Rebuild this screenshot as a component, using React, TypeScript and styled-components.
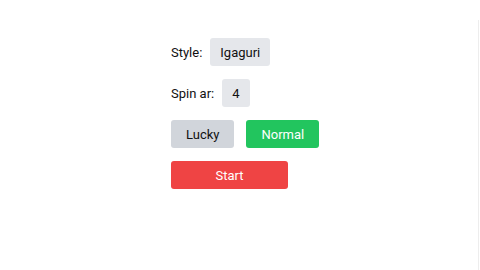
import React from "react";
import styled, { createGlobalStyle } from "styled-components";

const GlobalStyle = createGlobalStyle`
    html, body {
        margin: 0;
        padding: 0;
        background: #ffffff;
    }
    body {
        font-family: Roboto, "Noto Sans", sans-serif;
        color: #111111;
    }
`;

const SPage = styled.div`
    width: 480px;
    height: 270px;
    box-sizing: border-box;
    padding: 38px 0 0 171px;
    position: relative;
`;

const SEdge = styled.div`
    position: absolute;
    top: 20px;
    right: 1px;
    bottom: 0;
    width: 1px;
    background: #ededed;
`;

const SPanel = styled.div`
    display: flex;
    flex-direction: column;
    gap: 13px;
`;

const SRow = styled.div<{ $gap?: number }>`
    display: flex;
    align-items: center;
    gap: ${(p) => p.$gap ?? 12}px;
    height: 28px;
`;

const SLabel = styled.span`
    font-size: 13px;
`;

const SButton = styled.button<{ $bg: string; $light?: boolean; $pad?: number; $width?: number }>`
    height: 28px;
    box-sizing: border-box;
    padding: 0 ${(p) => p.$pad ?? 10}px;
    ${(p) => (p.$width ? `width: ${p.$width}px;` : "")}
    border: none;
    border-radius: 3px;
    background: ${(p) => p.$bg};
    color: ${(p) => (p.$light ? "#ffffff" : "#111111")};
    font-family: Roboto, "Noto Sans", sans-serif;
    font-size: 13px;
    cursor: pointer;
`;

export default function App() {
    return (
        <>
            <GlobalStyle />
            <SPage>
                <SPanel>
                    <SRow $gap={8}>
                        <SLabel>Style:</SLabel>
                        <SButton $bg="#e5e7eb">Igaguri</SButton>
                    </SRow>
                    <SRow $gap={8}>
                        <SLabel>Spin ar:</SLabel>
                        <SButton $bg="#e5e7eb">4</SButton>
                    </SRow>
                    <SRow>
                        <SButton $bg="#d1d5db" $pad={15}>Lucky</SButton>
                        <SButton $bg="#22c55e" $light $pad={15}>Normal</SButton>
                    </SRow>
                    <SRow>
                        <SButton $bg="#ef4444" $light $width={117}>Start</SButton>
                    </SRow>
                </SPanel>
                <SEdge />
            </SPage>
        </>
    );
}
